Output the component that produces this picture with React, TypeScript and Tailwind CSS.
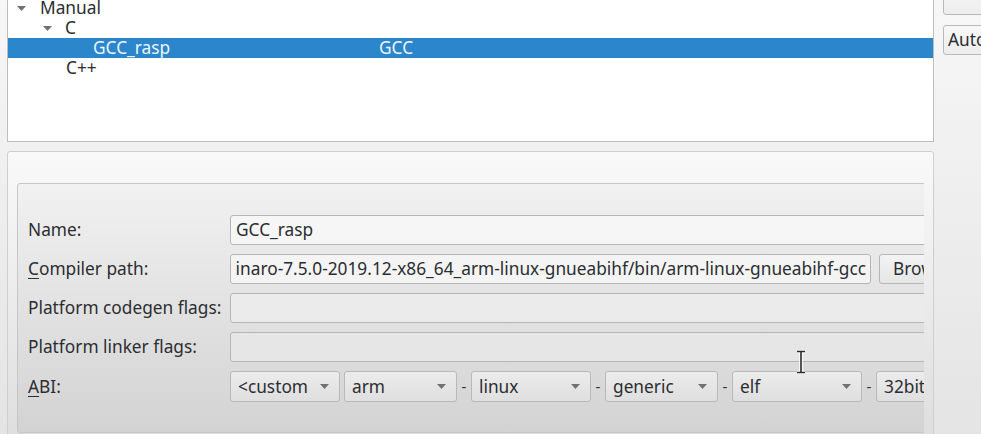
import React from 'react';

const font = { fontFamily: '"Noto Sans", "Open Sans", sans-serif' };

const Arrow: React.FC<{ className?: string }> = ({ className }) => (
  <svg width="9" height="5" viewBox="0 0 9 5" className={className}>
    <path d="M0 0 L9 0 L4.5 5 Z" fill="#6f7275" />
  </svg>
);

const Combo: React.FC<{ label: string; w: string }> = ({ label, w }) => (
  <div
    className={`${w} h-[31px] shrink-0 flex items-center justify-between pl-[7px] pr-[10px] border border-[#b9b9b9] rounded-[3px] bg-gradient-to-b from-[#ececec] to-[#dfdfdf] overflow-hidden`}
  >
    <span className="whitespace-nowrap">{label}</span>
    <Arrow className="shrink-0" />
  </div>
);

const Sep = () => <span className="w-[14px] shrink-0 text-center text-[15px]">-</span>;

const FormLabel: React.FC<{ children: React.ReactNode }> = ({ children }) => (
  <div className="w-[202px] shrink-0 whitespace-nowrap">{children}</div>
);

export default function App() {
  return (
    <div
      className="w-[981px] h-[434px] overflow-hidden relative bg-gradient-to-b from-[#f7f7f8] to-[#e4e4e5] text-[17.3px] leading-none text-[#2b2e31]"
      style={font}
    >
      <div className="flex">
        {/* tree */}
        <div className="ml-[7px] w-[927px] h-[142px] shrink-0 bg-white border border-t-0 border-[#bdbdbd] overflow-hidden">
          <div className="-mt-[2px]">
            <div className="h-5 flex items-center">
              <Arrow className="ml-[9px] mr-[14px]" />
              <span>Manual</span>
            </div>
            <div className="h-5 flex items-center">
              <Arrow className="ml-[35px] mr-[13px]" />
              <span>C</span>
            </div>
            <div className="h-5 flex items-center bg-[#2b86cb] text-[#eef4fa]">
              <span className="ml-[85px] w-[286px]">GCC_rasp</span>
              <span>GCC</span>
            </div>
            <div className="h-5 flex items-center">
              <span className="ml-[58px]">C++</span>
            </div>
          </div>
        </div>
        {/* buttons */}
        <div className="ml-[9px] flex flex-col gap-[10px] -mt-[15px]">
          <div className="w-[120px] h-[30px] border border-[#b9b9b9] rounded-[3px] bg-gradient-to-b from-[#f8f8f8] to-[#ececec]" />
          <div className="w-[120px] h-[30px] border border-[#b9b9b9] rounded-[3px] bg-gradient-to-b from-[#f8f8f8] to-[#ececec] flex items-center pl-[4px] whitespace-nowrap">
            Auto-detect
          </div>
        </div>
      </div>

      {/* lower panel */}
      <div className="ml-[7px] mt-[9px] w-[927px] h-[300px] border border-[#cfcfd1] rounded-t-[3px] bg-gradient-to-b from-[#f9f9fa] to-[#dddddd] pl-[9px] pr-[9px] pt-[31px]">
        <div className="w-[907px] h-[280px] overflow-hidden">
          <div className="w-[1000px] h-[250px] border border-[#c6c6c8] rounded-[3px] bg-gradient-to-b from-[#f1f1f2] to-[#d3d3d3] pl-[10px] pt-[31px] flex flex-col gap-[9px]">
            <div className="flex items-center h-[30px]">
              <FormLabel>Name:</FormLabel>
              <div className="w-[760px] h-[30px] border border-[#b6b6b6] rounded-[3px] bg-[#f6f6f6] flex items-center pl-[5px]">
                GCC_rasp
              </div>
            </div>
            <div className="flex items-center h-[30px]">
              <FormLabel>
                <span className="underline underline-offset-[3px]">C</span>ompiler path:
              </FormLabel>
              <div className="w-[641px] h-[30px] shrink-0 border border-[#b6b6b6] rounded-[3px] bg-[#f4f4f4] flex items-center justify-end pr-[4px] overflow-hidden whitespace-nowrap">
                inaro-7.5.0-2019.12-x86_64_arm-linux-gnueabihf/bin/arm-linux-gnueabihf-gcc
              </div>
              <div className="ml-[8px] w-[100px] h-[30px] shrink-0 border border-[#b6b6b6] rounded-[3px] bg-gradient-to-b from-[#f3f3f3] to-[#e6e6e6] flex items-center pl-[13px] whitespace-nowrap">
                Browse...
              </div>
            </div>
            <div className="flex items-center h-[30px]">
              <FormLabel>Platform codegen flags:</FormLabel>
              <div className="w-[760px] h-[30px] border border-[#b6b6b6] rounded-[3px] bg-[#ebebeb]" />
            </div>
            <div className="flex items-center h-[30px]">
              <FormLabel>Platform linker flags:</FormLabel>
              <div className="w-[760px] h-[30px] border border-[#b6b6b6] rounded-[3px] bg-[#e6e6e6]" />
            </div>
            <div className="flex items-center h-[31px]">
              <FormLabel>
                <span className="underline underline-offset-[3px]">A</span>BI:
              </FormLabel>
              <Combo label="<custom" w="w-[110px]" />
              <div className="w-[4px] shrink-0" />
              <Combo label="arm" w="w-[113px]" />
              <Sep />
              <Combo label="linux" w="w-[120px]" />
              <Sep />
              <Combo label="generic" w="w-[113px]" />
              <Sep />
              <Combo label="elf" w="w-[130px]" />
              <Sep />
              <div className="w-[90px] h-[31px] shrink-0 border border-[#b9b9b9] rounded-[3px] bg-gradient-to-b from-[#ececec] to-[#dfdfdf] flex items-center pl-[7px]">
                32bit
              </div>
            </div>
          </div>
        </div>
      </div>

      {/* mouse I-beam cursor */}
      <svg width="12" height="24" viewBox="0 0 12 24" className="absolute left-[795px] top-[350px]">
        <path d="M2 1.5 H10 M6 1.5 V22.5 M2 22.5 H10" stroke="#ffffff" strokeWidth="3.5" fill="none" />
        <path d="M2 1.5 H10 M6 1.5 V22.5 M2 22.5 H10" stroke="#2a2a2a" strokeWidth="1.6" fill="none" />
      </svg>
    </div>
  );
}
